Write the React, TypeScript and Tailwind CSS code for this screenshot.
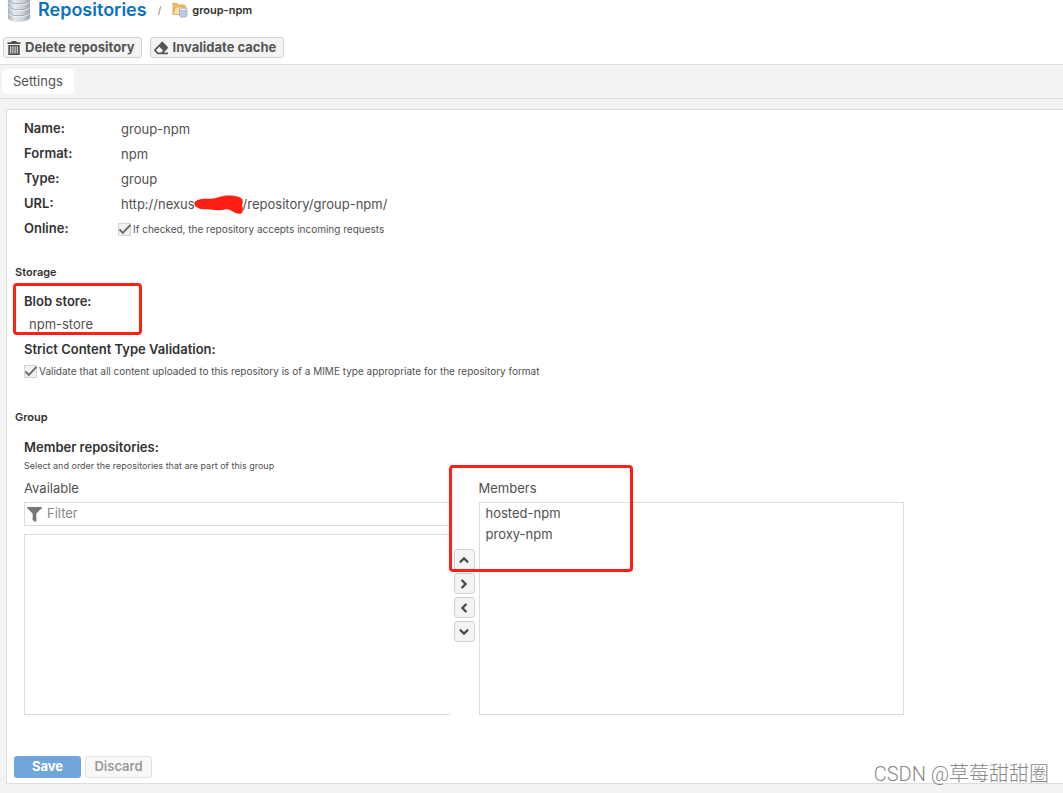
import React, { useState } from 'react';
import { FaChevronDown, FaChevronLeft, FaChevronRight, FaChevronUp, FaEraser, FaFilter } from 'react-icons/fa';

interface CheckFieldProps {
  id: string;
  label: string;
}

const details = [
  { label: 'Name:', value: 'group-npm' },
  { label: 'Format:', value: 'npm' },
  { label: 'Type:', value: 'group' },
];

const members = ['hosted-npm', 'proxy-npm'];

const moves = [
  { label: 'Move up', Icon: FaChevronUp },
  { label: 'Add to members', Icon: FaChevronRight },
  { label: 'Remove from members', Icon: FaChevronLeft },
  { label: 'Move down', Icon: FaChevronDown },
];

function DatabaseIcon() {
  return (
    <svg width="24" height="22" viewBox="0 0 24 22" aria-hidden="true">
      <defs>
        <linearGradient id="metal" x1="0" x2="1" y1="0" y2="0">
          <stop offset="0" stopColor="#a9b0ba" />
          <stop offset="0.3" stopColor="#e6eaef" />
          <stop offset="0.65" stopColor="#ccd2da" />
          <stop offset="1" stopColor="#9ca4af" />
        </linearGradient>
      </defs>
      <ellipse cx="12" cy="18.5" rx="11" ry="3.2" fill="#d3d3d3" />
      <path d="M1 -4V17.5C1 19.5 6 21 12 21S23 19.5 23 17.5V-4Z" fill="url(#metal)" />
      <path d="M1 0.5C2 3 7 4 12 4S22 3 23 0.5M1 6C2 8.700 7 9.800 12 9.800S22 8.700 23 6M1 12C2 14.700 7 15.800 12 15.800S22 14.700 23 12" fill="none" stroke="#949daa" strokeWidth="0.9" />
      <path d="M1.500 1.800C3 4 7 5 12 5S21 4 22.500 1.800M1.500 7.300C3 9.700 7 10.800 12 10.800S21 9.700 22.500 7.300M1.500 13.300C3 15.700 7 16.800 12 16.800S21 15.700 22.500 13.300" fill="none" stroke="#f6f8fa" strokeWidth="0.9" />
    </svg>
  );
}

function FolderIcon() {
  return (
    <svg width="16" height="16" viewBox="0 0 16 16" aria-hidden="true">
      <path d="M1 12.500V1.500H5L6.200 3H12.500V5.500H4Z" fill="#f3c469" stroke="#d79b45" strokeWidth="0.8" />
      <path d="M1 12.500L3.500 5H14.500L12.500 12.500Z" fill="#fbe0a0" stroke="#dfa650" strokeWidth="0.8" />
      <path d="M7.500 7.500V13.500C7.500 14.500 9 15.200 11.300 15.200S15 14.500 15 13.500V7.500Z" fill="#b9cbe0" stroke="#8fa5bf" strokeWidth="0.7" />
      <ellipse cx="11.250" cy="7.500" rx="3.750" ry="1.500" fill="#e4edf6" stroke="#8fa5bf" strokeWidth="0.7" />
    </svg>
  );
}

function TrashIcon() {
  return (
    <svg width="14" height="14" viewBox="0 0 14 14" fill="#4d4d4d" aria-hidden="true">
      <path d="M4.500 0H9.500V1.200H13.500V3H0.500V1.200H4.500Z" />
      <path fillRule="evenodd" d="M1.300 4H12.700V14H1.300ZM3.200 5.200V12.500H4.200V5.200ZM5.400 5.200V12.500H6.400V5.200ZM7.600 5.200V12.500H8.600V5.200ZM9.800 5.200V12.500H10.800V5.200Z" />
    </svg>
  );
}

function Scribble() {
  return (
    <svg width="50" height="20" viewBox="0 0 50 20" className="-mx-px shrink-0" aria-hidden="true">
      <path
        d="M2 6C6 3 13 4 19 3.500C24 3 28 0.500 34 0.500C39 0.500 44 1 47 3C49.500 5 49 8 48 10C49 13 49.500 16 48 18C45 20 41 18 38 16C35 14.500 33 14 31 14.500C26 16 21 15 16 14.500C12 14 8 15 4 13C0 11 -1 8 2 6Z"
        fill="#ff2015"
      />
    </svg>
  );
}

function CheckField({ id, label }: CheckFieldProps) {
  const [checked, setChecked] = useState(true);

  return (
    <div className="flex items-center gap-[2px]">
      <span className="grid shrink-0">
        <input
          id={id}
          type="checkbox"
          checked={checked}
          onChange={() => setChecked(!checked)}
          className="col-start-1 row-start-1 size-[13px] appearance-none border border-[#d4d4d4] bg-[#f1f1f1]"
        />
        {checked && (
          <svg width="13" height="13" viewBox="0 0 13 13" className="pointer-events-none col-start-1 row-start-1" aria-hidden="true">
            <path d="M1.500 6.500L4.800 9.800L12.500 1.800" fill="none" stroke="#6a6a6a" strokeWidth="1.900" />
          </svg>
        )}
      </span>
      <label htmlFor={id} className="text-[10px]">{label}</label>
    </div>
  );
}

export default function App() {
  const [filter, setFilter] = useState('');

  const toolButton = 'flex h-[21px] items-center gap-1 rounded-[3px] border border-[#d1d1d1] bg-[#f4f4f4] pr-[7px] pl-[3px] text-[13px] font-bold text-[#555555]';

  return (
    <div className="relative flex min-h-screen flex-col bg-[#f3f3f3] pb-[9px] font-['Inter',sans-serif] text-[13px] text-[#505050]">
      {/* Header */}
      <header className="border-b border-[#dddddd] bg-white pb-[6px]">
        <nav className="flex h-[22px] items-start pl-[7px]" aria-label="Breadcrumb">
          <DatabaseIcon />
          <a href="#repositories" className="ml-[7px] text-[18px] leading-5 font-semibold text-[#0a72c2]">Repositories</a>
          <span className="mx-[11px] text-[10px] leading-5 text-[#777777]">/</span>
          <span className="flex items-center gap-1 text-[11px] leading-5 font-semibold text-[#333333]">
            <FolderIcon />
            group-npm
          </span>
        </nav>
        <div className="mt-[15px] flex gap-2 pl-[3px]">
          <button type="button" className={toolButton}>
            <TrashIcon />
            Delete repository
          </button>
          <button type="button" className={toolButton}>
            <FaEraser className="size-[14px]" />
            Invalidate cache
          </button>
        </div>
      </header>

      {/* Tabs */}
      <div className="flex border-b border-[#dddddd] px-[2px] py-1">
        <button type="button" className="h-[25px] rounded-[4px] bg-white px-[11px]">Settings</button>
      </div>

      <main className="mt-[10px] ml-[6px] border border-r-0 border-[#dddddd] bg-white pb-[5px]">
        <dl className="pt-[6px] pl-[17px]">
          {details.map(item => (
            <div key={item.label} className="flex h-[25px] items-center">
              <dt className="w-[97px] font-semibold text-[#333333]">{item.label}</dt>
              <dd className="pt-[2px]">{item.value}</dd>
            </div>
          ))}
          <div className="flex h-[25px] items-center">
            <dt className="w-[97px] font-semibold text-[#333333]">URL:</dt>
            <dd className="flex items-center pt-[2px]">
              http://nexus
              <Scribble />
              /repository/group-npm/
            </dd>
          </div>
          <div className="flex h-[25px] items-center">
            <dt className="w-[94px] font-semibold text-[#333333]">Online:</dt>
            <dd className="pt-[2px]"><CheckField id="online" label="If checked, the repository accepts incoming requests" /></dd>
          </div>
        </dl>

        {/* Storage */}
        <section className="mt-[22px] pl-2">
          <h2 className="text-[11px] leading-[18px] font-semibold text-[#333333]">Storage</h2>
          <div className="relative mt-[11px] pl-[9px]">
            <h3 className="leading-[18px] font-semibold text-[#333333]">Blob store:</h3>
            <p className="mt-1 pl-[5px] leading-5">npm-store</p>
            <div className="pointer-events-none absolute -top-[9px] -left-[2px] h-[52px] w-[129px] rounded-[4px] border-3 border-[#ff2015]" />
          </div>
          <div className="mt-[6px] pl-[9px]">
            <h3 className="leading-[18px] font-semibold text-[#333333]">Strict Content Type Validation:</h3>
            <div className="mt-1 leading-[18px]">
              <CheckField id="strict" label="Validate that all content uploaded to this repository is of a MIME type appropriate for the repository format" />
            </div>
          </div>
        </section>

        {/* Group */}
        <section className="mt-[28px] pl-2">
          <h2 className="text-[11px] leading-[18px] font-semibold text-[#333333]">Group</h2>
          <div className="mt-3 pl-[9px]">
            <h3 className="leading-[18px] font-semibold text-[#333333]">Member repositories:</h3>
            <p className="mt-[2px] text-[9px] leading-4">Select and order the repositories that are part of this group</p>

            <div className="relative mt-1 flex max-w-[880px]">
              <div className="flex flex-1 flex-col">
                <label htmlFor="filter" className="leading-5">Available</label>
                <div className="mt-1 flex h-[24px] items-center gap-[5px] border border-r-0 border-[#dddddd] pl-[2px]">
                  <FaFilter className="size-[15px] text-[#777777]" />
                  <input
                    id="filter"
                    value={filter}
                    onChange={e => setFilter(e.target.value)}
                    placeholder="Filter"
                    className="min-w-0 flex-1 outline-none placeholder:text-[#888888]"
                  />
                </div>
                <ul aria-label="Available repositories" className="mt-2 h-[181px] border border-r-0 border-[#dddddd]" />
              </div>

              <div className="flex flex-col gap-[3px] px-1 pt-[71px]">
                {moves.map(({ label, Icon }) => (
                  <button key={label} type="button" aria-label={label} className="flex size-[21px] items-center justify-center rounded-[3px] border border-[#d1d1d1] bg-[#f4f4f4] text-[#444444]">
                    <Icon className="size-[10px] stroke-current stroke-[40px]" />
                  </button>
                ))}
              </div>

              <div className="flex flex-1 flex-col">
                <h4 className="leading-5">Members</h4>
                <ul aria-label="Members" className="mt-1 h-[213px] border border-[#dddddd] pl-[6px]">
                  {members.map(name => (
                    <li key={name} className="leading-[21px]">{name}</li>
                  ))}
                </ul>
              </div>

              <div className="pointer-events-none absolute -top-[13px] left-[425px] h-[107px] w-[184px] rounded-[4px] border-3 border-[#ff2015]" />
            </div>
          </div>
        </section>

        <div className="mt-[41px] flex gap-1 pl-[7px]">
          <button type="button" className="h-[22px] w-[67px] rounded-[3px] bg-[#70a6da] font-bold text-white">Save</button>
          <button type="button" className="h-[22px] w-[67px] rounded-[3px] border border-[#e1e1e1] bg-[#f8f8f8] font-semibold text-[#999999]">Discard</button>
        </div>
      </main>

      <span className="absolute right-[14px] bottom-[7px] font-['Roboto','Noto_Sans_CJK_SC',sans-serif] text-[20px] leading-6 font-light text-[#888888]">
        CSDN @草莓甜甜圈
      </span>
    </div>
  );
}
